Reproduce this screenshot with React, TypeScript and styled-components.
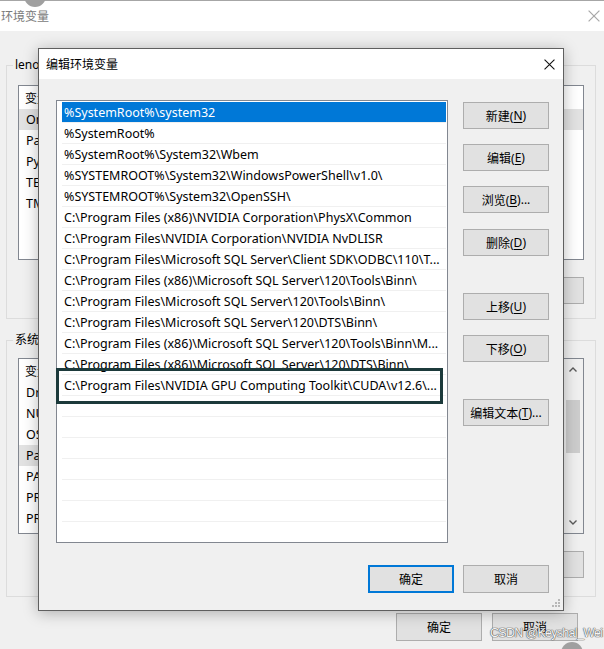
import React from "react";
import styled, { createGlobalStyle } from "styled-components";

const UI_FONT = `"Noto Sans", "Noto Sans CJK SC", sans-serif`;

const GlobalStyle = createGlobalStyle`
  html, body { margin: 0; padding: 0; background: #f0f0f0; }
  body { font-family: ${UI_FONT}; overflow: hidden; }
  * { box-sizing: border-box; }
  u { text-underline-offset: 2px; }
`;

const Desktop = styled.div`
  position: relative;
  width: 604px;
  height: 649px;
  overflow: hidden;
  background: #f0f0f0;
  font-family: ${UI_FONT};
`;

/* ---------- background window ---------- */
const BgWindow = styled.div`
  display: flex;
  flex-direction: column;
  width: 604px;
  height: 649px;
`;

const BgTitleBar = styled.div`
  height: 31px;
  flex: none;
  background: #fff;
  border-top: 1px solid #a6a6a6;
  display: flex;
  align-items: center;
  justify-content: space-between;
  padding: 0 4px 0 1px;
  font-size: 12px;
  color: #7a7a7a;
`;

const BgBody = styled.div`
  flex: 1;
  display: flex;
  flex-direction: column;
  padding: 26px 8px 0 6px;
`;

const Group = styled.fieldset<{ $mt: number; $pt: number; $pb: number }>`
  margin: ${(p) => p.$mt}px 0 0 0;
  border: 1px solid #dcdcdc;
  padding: ${(p) => p.$pt}px 11px ${(p) => p.$pb}px 11px;
  min-width: 0;
  display: flex;
  flex-direction: column;
`;

const Legend = styled.legend`
  font-size: 12px;
  line-height: 16px;
  padding: 0 2px;
  margin-left: -5px;
  color: #000;
`;

const VarList = styled.div<{ $h: number }>`
  height: ${(p) => p.$h}px;
  border: 1px solid #828790;
  background: #fff;
  display: flex;
  overflow: hidden;
`;

const VarCols = styled.div`
  flex: 1;
  display: flex;
  flex-direction: column;
  min-width: 0;
`;

const VarHeader = styled.div`
  height: 23px;
  flex: none;
  display: grid;
  grid-template-columns: 150px 1fr;
  align-items: center;
  font-size: 12px;
  color: #000;
  padding-left: 6px;
`;

const VarRow = styled.div<{ $sel?: boolean }>`
  height: 21px;
  flex: none;
  display: grid;
  grid-template-columns: 150px 1fr;
  align-items: center;
  font-size: 12.5px;
  padding-left: 7px;
  white-space: nowrap;
  background: ${(p) => (p.$sel ? "#e2e2e2" : "transparent")};
`;

const ScrollBar = styled.div`
  width: 20px;
  flex: none;
  background: #f0f0f0;
  display: flex;
  flex-direction: column;
  align-items: center;
`;

const ScrollArrow = styled.div`
  height: 21px;
  flex: none;
  display: flex;
  align-items: center;
  justify-content: center;
`;

const ScrollTrack = styled.div`
  flex: 1;
  width: 100%;
  display: flex;
  justify-content: center;
  padding-top: 20px;
`;

const Thumb = styled.div`
  width: 14px;
  height: 53px;
  background: #cdcdcd;
`;

const BgButtons = styled.div`
  display: flex;
  justify-content: flex-end;
  gap: 10px;
  margin-top: 17px;
`;

const WinButton = styled.button<{ $w?: number; $h?: number; $default?: boolean; $mt?: number }>`
  width: ${(p) => p.$w ?? 86}px;
  height: ${(p) => p.$h ?? 27}px;
  margin-top: ${(p) => p.$mt ?? 0}px;
  flex: none;
  background: #e1e1e1;
  border: ${(p) => (p.$default ? "2px solid #0078d7" : "1px solid #adadad")};
  font-family: ${UI_FONT};
  font-size: 12px;
  color: #000;
  padding: 0;
  display: flex;
  align-items: center;
  justify-content: center;
  white-space: nowrap;
`;

const BgFooter = styled.div`
  display: flex;
  justify-content: flex-end;
  gap: 10px;
  margin-top: 16px;
  padding-right: 18px;
`;

/* ---------- foreground dialog ---------- */
const Dialog = styled.div`
  position: absolute;
  left: 38px;
  top: 48px;
  width: 526px;
  height: 563px;
  border: 1px solid #5f5f5f;
  background: #f0f0f0;
  box-shadow: 0 2px 14px rgba(0, 0, 0, 0.28);
  display: flex;
  flex-direction: column;
`;

const DlgTitleBar = styled.div`
  height: 30px;
  flex: none;
  background: #fff;
  display: flex;
  align-items: center;
  justify-content: space-between;
  padding: 0 8px 0 7px;
  font-size: 12px;
  color: #000;
`;

const DlgBody = styled.div`
  flex: 1;
  display: flex;
  flex-direction: column;
  padding: 21px 14px 0 17px;
  position: relative;
`;

const DlgMain = styled.div`
  display: flex;
  gap: 15px;
`;

const PathList = styled.div`
  width: 392px;
  height: 443px;
  flex: none;
  border: 1px solid #828790;
  background: #fff;
  padding: 1px 1px 0 5px;
  overflow: hidden;
`;

const PathRow = styled.div<{ $selected?: boolean }>`
  height: 21px;
  line-height: 21px;
  padding-left: 2px;
  white-space: nowrap;
  overflow: hidden;
  font-size: 12.5px;
  border-bottom: 1px solid #f0f0f0;
  background: ${(p) => (p.$selected ? "#0078d7" : "transparent")};
  color: ${(p) => (p.$selected ? "#fff" : "#000")};
`;

const ButtonColumn = styled.div`
  display: flex;
  flex-direction: column;
`;

const DlgFooter = styled.div`
  display: flex;
  justify-content: flex-end;
  gap: 9px;
  margin-top: 22px;
`;

const Grip = styled.svg`
  position: absolute;
  right: 3px;
  bottom: 3px;
`;

/* ---------- overlays ---------- */
const Highlight = styled.div`
  position: absolute;
  left: 56px;
  top: 368px;
  width: 387px;
  height: 36px;
  border: 3px solid #1c3a3b;
`;

const Watermark = styled.div`
  position: absolute;
  left: 490px;
  top: 626px;
  font-family: "Liberation Sans", Arial, sans-serif;
  font-size: 12.5px;
  letter-spacing: -0.7px;
  color: rgba(255, 255, 255, 0.95);
  text-shadow: 0 0 1px #5a5a5a, 0 0 1px #5a5a5a, 0 0 1px #5a5a5a;
  white-space: nowrap;
`;

const Dot = styled.div<{ $x: number; $y: number }>`
  position: absolute;
  left: ${(p) => p.$x}px;
  top: ${(p) => p.$y}px;
  width: 22px;
  height: 22px;
  border-radius: 50%;
  background: #a0a0a0;
`;

const CloseIcon = ({ size, color }: { size: number; color: string }) => (
  <svg width={size} height={size} viewBox="0 0 10 10">
    <path d="M0.5 0.5 L9.5 9.5 M9.5 0.5 L0.5 9.5" stroke={color} strokeWidth="1" fill="none" />
  </svg>
);

const Chevron = ({ up }: { up?: boolean }) => (
  <svg width="8" height="5" viewBox="0 0 8 5">
    <path
      d={up ? "M0.5 4.5 L4 1 L7.5 4.5" : "M0.5 0.5 L4 4 L7.5 0.5"}
      stroke="#5a5a5a"
      strokeWidth="1.4"
      fill="none"
    />
  </svg>
);

const paths = [
  "%SystemRoot%\\system32",
  "%SystemRoot%",
  "%SystemRoot%\\System32\\Wbem",
  "%SYSTEMROOT%\\System32\\WindowsPowerShell\\v1.0\\",
  "%SYSTEMROOT%\\System32\\OpenSSH\\",
  "C:\\Program Files (x86)\\NVIDIA Corporation\\PhysX\\Common",
  "C:\\Program Files\\NVIDIA Corporation\\NVIDIA NvDLISR",
  "C:\\Program Files\\Microsoft SQL Server\\Client SDK\\ODBC\\110\\T...",
  "C:\\Program Files (x86)\\Microsoft SQL Server\\120\\Tools\\Binn\\",
  "C:\\Program Files\\Microsoft SQL Server\\120\\Tools\\Binn\\",
  "C:\\Program Files\\Microsoft SQL Server\\120\\DTS\\Binn\\",
  "C:\\Program Files (x86)\\Microsoft SQL Server\\120\\Tools\\Binn\\M...",
  "C:\\Program Files (x86)\\Microsoft SQL Server\\120\\DTS\\Binn\\",
  "C:\\Program Files\\NVIDIA GPU Computing Toolkit\\CUDA\\v12.6\\...",
  "",
  "",
  "",
  "",
  "",
  "",
  "",
];

const userVars: [string, string][] = [
  ["OneDrive", "C:\\Users\\lenovo\\OneDrive"],
  ["Path", "C:\\Users\\lenovo\\AppData\\Local\\Microsoft\\WindowsApps;"],
  ["PyCharm Community Edition", "C:\\Program Files\\JetBrains\\PyCharm\\bin;"],
  ["TEMP", "C:\\Users\\lenovo\\AppData\\Local\\Temp"],
  ["TMP", "C:\\Users\\lenovo\\AppData\\Local\\Temp"],
];

const sysVars: [string, string][] = [
  ["DriverData", "C:\\Windows\\System32\\Drivers\\DriverData"],
  ["NUMBER_OF_PROCESSORS", "16"],
  ["OS", "Windows_NT"],
  ["Path", "C:\\Windows\\system32;C:\\Windows;"],
  ["PATHEXT", ".COM;.EXE;.BAT;.CMD;.VBS;.VBE;.JS"],
  ["PROCESSOR_ARCHITECTURE", "AMD64"],
  ["PROCESSOR_IDENTIFIER", "Intel64 Family 6 Model 154"],
];

export default function App() {
  return (
    <Desktop>
      <GlobalStyle />
      <BgWindow>
        <BgTitleBar>
          <span>环境变量</span>
          <CloseIcon size={12} color="#a8a8a8" />
        </BgTitleBar>
        <BgBody>
          <Group $mt={0} $pt={12} $pb={14}>
            <Legend>lenovo 的用户变量(U)</Legend>
            <VarList $h={175}>
              <VarCols>
                <VarHeader>
                  <span>变量</span>
                  <span>值</span>
                </VarHeader>
                {userVars.map(([k, v], i) => (
                  <VarRow key={k} $sel={i === 0}>
                    <span>{k}</span>
                    <span>{v}</span>
                  </VarRow>
                ))}
              </VarCols>
            </VarList>
            <BgButtons>
              <WinButton>新建(<u>N</u>)...</WinButton>
              <WinButton>编辑(<u>E</u>)...</WinButton>
              <WinButton>删除(<u>D</u>)</WinButton>
            </BgButtons>
          </Group>
          <Group $mt={13} $pt={10} $pb={18}>
            <Legend>系统变量(S)</Legend>
            <VarList $h={176}>
              <VarCols>
                <VarHeader>
                  <span>变量</span>
                  <span>值</span>
                </VarHeader>
                {sysVars.map(([k, v]) => (
                  <VarRow key={k} $sel={k === "Path"}>
                    <span>{k}</span>
                    <span>{v}</span>
                  </VarRow>
                ))}
              </VarCols>
              <ScrollBar>
                <ScrollArrow>
                  <Chevron up />
                </ScrollArrow>
                <ScrollTrack>
                  <Thumb />
                </ScrollTrack>
                <ScrollArrow>
                  <Chevron />
                </ScrollArrow>
              </ScrollBar>
            </VarList>
            <BgButtons>
              <WinButton>新建(<u>W</u>)...</WinButton>
              <WinButton>编辑(<u>I</u>)...</WinButton>
              <WinButton>删除(<u>L</u>)</WinButton>
            </BgButtons>
          </Group>
          <BgFooter>
            <WinButton $h={28}>确定</WinButton>
            <WinButton $h={28}>取消</WinButton>
          </BgFooter>
        </BgBody>
      </BgWindow>

      <Dialog>
        <DlgTitleBar>
          <span>编辑环境变量</span>
          <CloseIcon size={11} color="#111" />
        </DlgTitleBar>
        <DlgBody>
          <DlgMain>
            <PathList>
              {paths.map((p, i) => (
                <PathRow key={i} $selected={i === 0}>
                  {p}
                </PathRow>
              ))}
            </PathList>
            <ButtonColumn>
              <WinButton $mt={2}>新建(<u>N</u>)</WinButton>
              <WinButton $mt={15}>编辑(<u>E</u>)</WinButton>
              <WinButton $mt={15}>浏览(<u>B</u>)...</WinButton>
              <WinButton $mt={16}>删除(<u>D</u>)</WinButton>
              <WinButton $mt={37}>上移(<u>U</u>)</WinButton>
              <WinButton $mt={15}>下移(<u>O</u>)</WinButton>
              <WinButton $mt={37}>编辑文本(<u>T</u>)...</WinButton>
            </ButtonColumn>
          </DlgMain>
          <DlgFooter>
            <WinButton $h={28} $default>
              确定
            </WinButton>
            <WinButton $h={28}>取消</WinButton>
          </DlgFooter>
          <Grip width="8" height="8" viewBox="0 0 8 8">
            <rect x="6" y="0" width="2" height="2" fill="#b8b8b8" />
            <rect x="3" y="3" width="2" height="2" fill="#b8b8b8" />
            <rect x="6" y="3" width="2" height="2" fill="#b8b8b8" />
            <rect x="0" y="6" width="2" height="2" fill="#b8b8b8" />
            <rect x="3" y="6" width="2" height="2" fill="#b8b8b8" />
            <rect x="6" y="6" width="2" height="2" fill="#b8b8b8" />
          </Grip>
        </DlgBody>
      </Dialog>

      <Highlight />
      <Watermark>CSDN @Keyshal_Wei</Watermark>
      <Dot $x={24} $y={-15} />
      <Dot $x={561} $y={642} />
    </Desktop>
  );
}
